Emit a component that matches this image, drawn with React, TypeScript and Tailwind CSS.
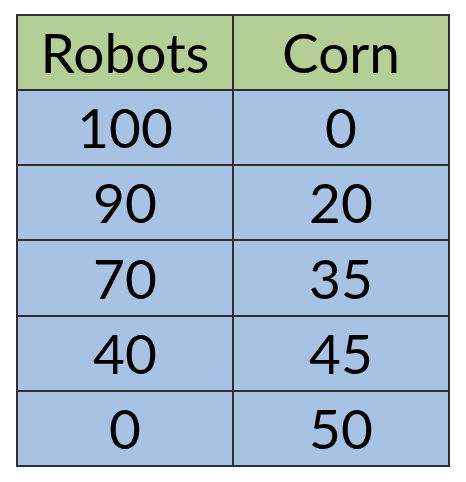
import { Fragment } from "react";

export default function App() {
  const rows = [
    ["100", "0"],
    ["90", "20"],
    ["70", "35"],
    ["40", "45"],
    ["0", "50"],
  ];
  return (
    <div className="w-[466px] h-[482px] bg-white pt-[14px] pl-[16px]" style={{ fontFamily: "Lato, 'Open Sans', sans-serif" }}>
      <div className="w-[434px] border-2 border-[#2e2e2e] grid grid-cols-[216px_214px] text-black text-[55px] leading-none">
        <div className="h-[75.17px] bg-[#b3cf95] flex items-center justify-center border-r-2 border-b-2 border-[#2e2e2e]">Robots</div>
        <div className="h-[75.17px] bg-[#b3cf95] flex items-center justify-center border-b-2 border-[#2e2e2e]">Corn</div>
        {rows.map((r, i) => (
          <Fragment key={i}>
            <div className={i < 4 ? "h-[75.17px] bg-[#a7c2e2] flex items-center justify-center border-r-2 border-b-2 border-[#2e2e2e]" : "h-[73.17px] bg-[#a7c2e2] flex items-center justify-center border-r-2 border-[#2e2e2e]"}>{r[0]}</div>
            <div className={i < 4 ? "h-[75.17px] bg-[#a7c2e2] flex items-center justify-center border-b-2 border-[#2e2e2e]" : "h-[73.17px] bg-[#a7c2e2] flex items-center justify-center"}>{r[1]}</div>
          </Fragment>
        ))}
      </div>
    </div>
  );
}
